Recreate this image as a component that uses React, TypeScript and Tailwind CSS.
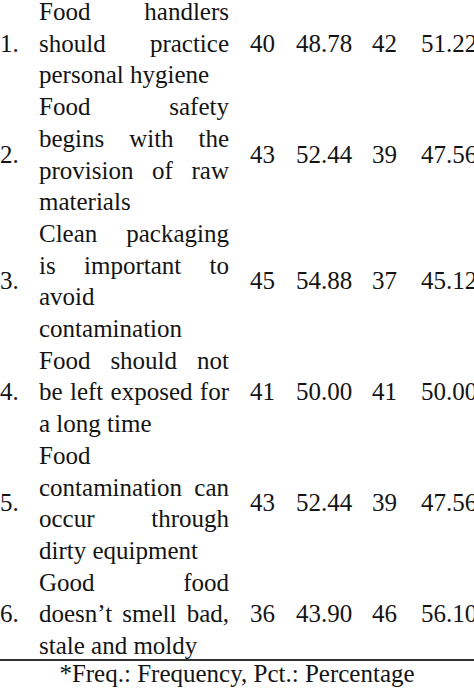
import React from "react";

type Line = { text: string; justify: boolean };

const rows: { no: string; lines: Line[]; vals: string[] }[] = [
  {
    no: "1.",
    lines: [
      { text: "Food handlers", justify: true },
      { text: "should practice", justify: true },
      { text: "personal hygiene", justify: false },
    ],
    vals: ["40", "48.78", "42", "51.22"],
  },
  {
    no: "2.",
    lines: [
      { text: "Food safety", justify: true },
      { text: "begins with the", justify: true },
      { text: "provision of raw", justify: true },
      { text: "materials", justify: false },
    ],
    vals: ["43", "52.44", "39", "47.56"],
  },
  {
    no: "3.",
    lines: [
      { text: "Clean packaging", justify: true },
      { text: "is important to", justify: true },
      { text: "avoid", justify: false },
      { text: "contamination", justify: false },
    ],
    vals: ["45", "54.88", "37", "45.12"],
  },
  {
    no: "4.",
    lines: [
      { text: "Food should not", justify: true },
      { text: "be left exposed for", justify: true },
      { text: "a long time", justify: false },
    ],
    vals: ["41", "50.00", "41", "50.00"],
  },
  {
    no: "5.",
    lines: [
      { text: "Food", justify: false },
      { text: "contamination can", justify: true },
      { text: "occur through", justify: true },
      { text: "dirty equipment", justify: false },
    ],
    vals: ["43", "52.44", "39", "47.56"],
  },
  {
    no: "6.",
    lines: [
      { text: "Good food", justify: true },
      { text: "doesn\u2019t smell bad,", justify: true },
      { text: "stale and moldy", justify: false },
    ],
    vals: ["36", "43.90", "46", "56.10"],
  },
];

const App = () => {
  return (
    <div
      className="w-[474px] h-[691px] overflow-hidden bg-white text-[#141414] text-[25px] leading-[31.7px]"
      style={{ fontFamily: '"Liberation Serif", "Times New Roman", serif' }}
    >
      <div className="mt-[-4px]">
        {rows.map((row) => (
          <div
            key={row.no}
            className="grid grid-cols-[39px_190px_67px_76px_49px_1fr] items-center"
          >
            <div>{row.no}</div>
            <div>
              {row.lines.map((line, i) =>
                line.justify ? (
                  <div key={i} className="flex justify-between whitespace-nowrap">
                    {line.text.split(" ").map((w, j) => (
                      <span key={j}>{w}</span>
                    ))}
                  </div>
                ) : (
                  <div key={i} className="whitespace-nowrap">
                    {line.text}
                  </div>
                )
              )}
            </div>
            <div className="pl-[21px]">{row.vals[0]}</div>
            <div>{row.vals[1]}</div>
            <div>{row.vals[2]}</div>
            <div className="whitespace-nowrap">{row.vals[3]}</div>
          </div>
        ))}
      </div>
      <div className="mt-[-3px] border-t-2 border-[#333]" />
      <div className="text-center leading-[26px] whitespace-nowrap">
        *Freq.: Frequency, Pct.: Percentage
      </div>
    </div>
  );
};

export default App;
